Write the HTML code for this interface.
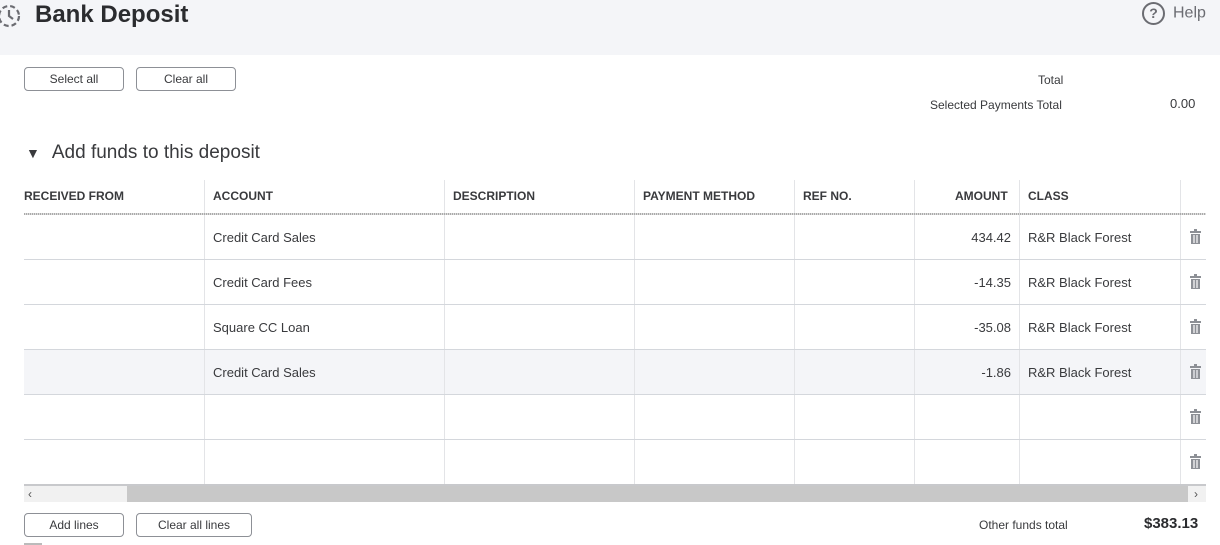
<!DOCTYPE html>
<html><head><meta charset="utf-8"><style>
*{margin:0;padding:0;box-sizing:border-box}
body{width:1220px;height:545px;overflow:hidden;background:#fff;font-family:"Liberation Sans",Arial,sans-serif;color:#393a3d;position:relative}
.hdr{position:absolute;left:0;top:0;width:1220px;height:55px;background:#f4f5f8}
.title{position:absolute;left:35px;top:0;font-size:24px;font-weight:bold;color:#2b2c2f;line-height:30px}
.help{position:absolute;left:1142px;top:2px;font-size:16px;color:#6b6c72;line-height:22px}
.help span{display:inline-block;width:23px;height:23px;border:2px solid #6b6c72;border-radius:50%;text-align:center;font-size:14px;line-height:19px;font-weight:bold;margin-right:8px;vertical-align:middle}
.btn{position:absolute;height:24px;border:1px solid #8d9096;border-radius:4px;font-size:12px;text-align:center;line-height:22px;color:#393a3d;background:#fff}
.t{position:absolute;font-size:12px;line-height:14px}
.sec{position:absolute;left:26px;top:142px;font-size:19px;line-height:22px;color:#393a3d}
.th{position:absolute;top:189px;font-size:12px;font-weight:bold;color:#393a3d;line-height:14px}
.vl{position:absolute;width:1px;background:#e3e4e7;top:180px;height:304px}
.hl{position:absolute;left:24px;width:1182px;height:1px;background:#d4d7dc}
.c{position:absolute;font-size:13px;line-height:14px;color:#393a3d}
.tr{position:absolute;width:11px;height:15px}
</style></head><body>
<div class="hdr"></div>
<svg style="position:absolute;left:-4px;top:3px" width="26" height="26" viewBox="0 0 26 26" fill="none" stroke="#6b6c72" stroke-width="2.2"><circle cx="13" cy="13" r="10" stroke-dasharray="5 3"/><path d="M13 7v6l4 3"/></svg>
<div class="title">Bank Deposit</div>
<div class="help"><span>?</span>Help</div>
<div class="btn" style="left:24px;top:67px;width:100px">Select all</div>
<div class="btn" style="left:136px;top:67px;width:100px">Clear all</div>
<div class="t" style="left:1038px;top:73px">Total</div>
<div class="t" style="left:930px;top:98px">Selected Payments Total</div>
<div class="t" style="left:1170px;top:97px;font-size:13px">0.00</div>
<div class="sec"><span style="font-size:14px;margin-right:12px">▼</span>Add funds to this deposit</div>
<div style="position:absolute;left:24px;top:350px;width:1182px;height:44px;background:#f4f5f8"></div>
<div class="th" style="left:24px">RECEIVED FROM</div>
<div class="th" style="left:213px">ACCOUNT</div>
<div class="th" style="left:453px">DESCRIPTION</div>
<div class="th" style="left:643px">PAYMENT METHOD</div>
<div class="th" style="left:803px">REF NO.</div>
<div class="th" style="left:955px">AMOUNT</div>
<div class="th" style="left:1028px">CLASS</div>
<div class="vl" style="left:204px"></div><div class="vl" style="left:444px"></div><div class="vl" style="left:634px"></div><div class="vl" style="left:794px"></div><div class="vl" style="left:914px"></div><div class="vl" style="left:1019px"></div><div class="vl" style="left:1180px"></div>
<div class="hl" style="top:213px;height:2px;background:repeating-linear-gradient(90deg,#aaa 0 1px,#ddd 1px 2px)"></div>
<div class="hl" style="top:259px"></div><div class="hl" style="top:304px"></div><div class="hl" style="top:349px"></div><div class="hl" style="top:394px"></div><div class="hl" style="top:439px"></div>
<div class="hl" style="top:484px;height:2px;background:#c8c9cc"></div>
<div class="c" style="left:213px;top:231px">Credit Card Sales</div>
<div class="c" style="left:213px;top:276px">Credit Card Fees</div>
<div class="c" style="left:213px;top:321px">Square CC Loan</div>
<div class="c" style="left:213px;top:366px">Credit Card Sales</div>
<div class="c" style="left:914px;width:97px;text-align:right;top:231px">434.42</div>
<div class="c" style="left:914px;width:97px;text-align:right;top:276px">-14.35</div>
<div class="c" style="left:914px;width:97px;text-align:right;top:321px">-35.08</div>
<div class="c" style="left:914px;width:97px;text-align:right;top:366px">-1.86</div>
<div class="c" style="left:1028px;top:231px">R&amp;R Black Forest</div>
<div class="c" style="left:1028px;top:276px">R&amp;R Black Forest</div>
<div class="c" style="left:1028px;top:321px">R&amp;R Black Forest</div>
<div class="c" style="left:1028px;top:366px">R&amp;R Black Forest</div>
<svg class="tr" style="left:1190px;top:229px" viewBox="0 0 11 15"><path d="M0 2h11v2H0zM4 0h3v2H4zM1 5h9v10H1z" fill="#8d9096"/><path d="M4 6v8M7 6v8" stroke="#fff" stroke-width="1.2"/></svg>
<svg class="tr" style="left:1190px;top:274px" viewBox="0 0 11 15"><path d="M0 2h11v2H0zM4 0h3v2H4zM1 5h9v10H1z" fill="#8d9096"/><path d="M4 6v8M7 6v8" stroke="#fff" stroke-width="1.2"/></svg>
<svg class="tr" style="left:1190px;top:319px" viewBox="0 0 11 15"><path d="M0 2h11v2H0zM4 0h3v2H4zM1 5h9v10H1z" fill="#8d9096"/><path d="M4 6v8M7 6v8" stroke="#fff" stroke-width="1.2"/></svg>
<svg class="tr" style="left:1190px;top:364px" viewBox="0 0 11 15"><path d="M0 2h11v2H0zM4 0h3v2H4zM1 5h9v10H1z" fill="#8d9096"/><path d="M4 6v8M7 6v8" stroke="#f4f5f8" stroke-width="1.2"/></svg>
<svg class="tr" style="left:1190px;top:409px" viewBox="0 0 11 15"><path d="M0 2h11v2H0zM4 0h3v2H4zM1 5h9v10H1z" fill="#8d9096"/><path d="M4 6v8M7 6v8" stroke="#fff" stroke-width="1.2"/></svg>
<svg class="tr" style="left:1190px;top:454px" viewBox="0 0 11 15"><path d="M0 2h11v2H0zM4 0h3v2H4zM1 5h9v10H1z" fill="#8d9096"/><path d="M4 6v8M7 6v8" stroke="#fff" stroke-width="1.2"/></svg>
<div style="position:absolute;left:24px;top:486px;width:1182px;height:16px;background:#f1f1f1"></div>
<div style="position:absolute;left:127px;top:486px;width:1061px;height:16px;background:#c8c8c8"></div>
<div style="position:absolute;left:28px;top:486px;font-size:12px;line-height:16px;color:#555">&lsaquo;</div>
<div style="position:absolute;left:1194px;top:486px;font-size:12px;line-height:16px;color:#555">&rsaquo;</div>
<div class="btn" style="left:24px;top:513px;width:100px">Add lines</div>
<div class="btn" style="left:136px;top:513px;width:116px">Clear all lines</div>
<div class="t" style="left:979px;top:518px">Other funds total</div>
<div style="position:absolute;left:1144px;top:515px;font-size:15px;font-weight:bold;color:#2b2c2f">$383.13</div>
<div style="position:absolute;left:24px;top:543px;width:18px;height:2px;background:#bbb"></div>
</body></html>
